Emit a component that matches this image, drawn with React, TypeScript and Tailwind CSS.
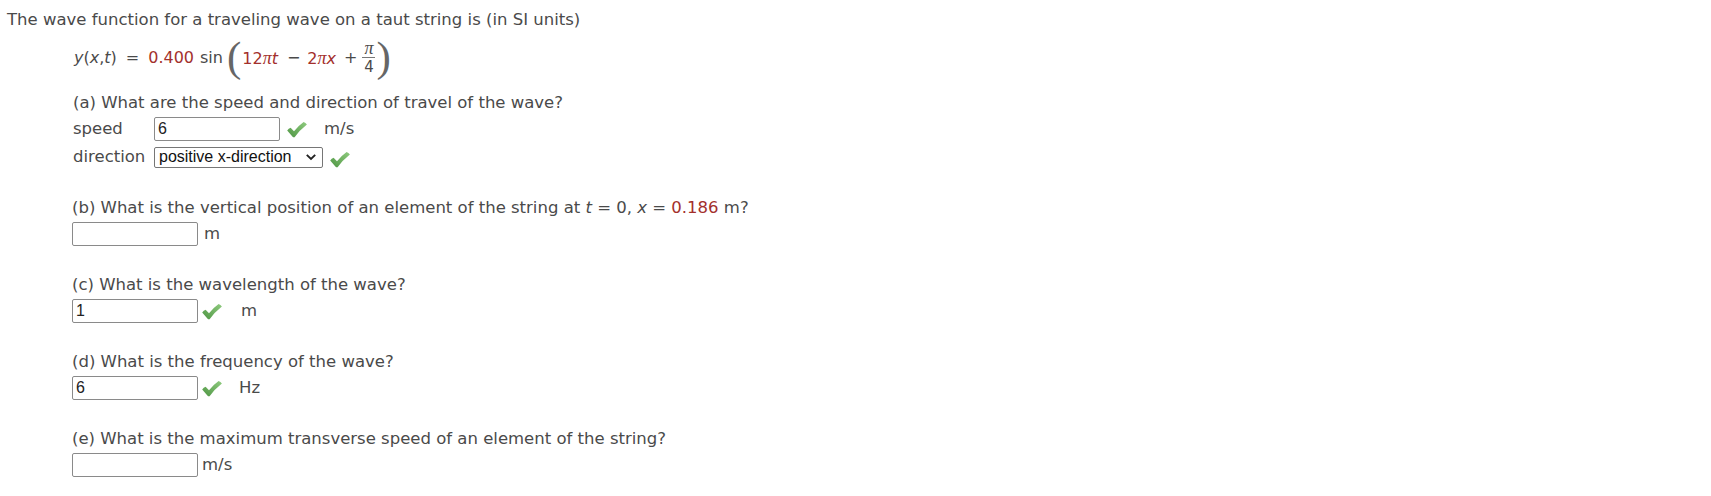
import React from "react";

const RED = "text-[#a3302c]";

function Check() {
  return (
    <svg width="22" height="17" viewBox="0 0 22 17" className="shrink-0">
      <defs>
        <linearGradient id="ck" x1="0" y1="1" x2="1" y2="0">
          <stop offset="0" stopColor="#4e9543" />
          <stop offset="1" stopColor="#8fcb7f" />
        </linearGradient>
      </defs>
      <path
        d="M1.2 9.6 Q2.6 7.6 4.6 6.8 L8 10.2 Q12.5 4.5 17.6 0.9 Q19.6 1.8 20.9 3.4 Q13.6 9 8.6 16.2 Q7.4 16.6 6.6 15.8 Z"
        fill="url(#ck)"
      />
    </svg>
  );
}

function Box({ value = "" }: { value?: string }) {
  return (
    <div className="w-[126px] h-[24px] border border-[#8a8a8a] rounded-[2px] bg-white flex items-center pl-[3px] text-[16px] text-[#222] font-['Liberation_Sans',Arial,sans-serif] shrink-0">
      {value}
    </div>
  );
}

function Question({ children }: { children: React.ReactNode }) {
  return <div className="mt-[28px] h-[20px] leading-[20px] pl-[65px] whitespace-nowrap">{children}</div>;
}

export default function App() {
  return (
    <div className="w-[1711px] h-[496px] bg-white text-[#4a4a4a] text-[16.5px] font-['DejaVu_Sans',Verdana,sans-serif] pl-[7px] pt-[10px] overflow-hidden">
      <div className="h-[20px] leading-[20px] whitespace-nowrap">
        The wave function for a traveling wave on a taut string is (in SI units)
      </div>

      <div className="mt-[8px] h-[40px] flex items-center pl-[67px] whitespace-nowrap text-[16px]">
        <span>
          <i>y</i>(<i>x</i>,<i>t</i>)
        </span>
        <span className="ml-[9px]">=</span>
        <span className={`ml-[9px] ${RED}`}>0.400</span>
        <span className="ml-[6px]">sin</span>
        <span className="ml-[4px] font-['Liberation_Serif',serif] text-[43px] leading-none text-[#666] -mt-[4px]">(</span>
        <span className={`ml-[1px] ${RED}`}>
          12<i className="font-['Liberation_Serif',serif] text-[18px]">π</i><i>t</i>
        </span>
        <span className="ml-[9px]">−</span>
        <span className={`ml-[7px] ${RED}`}>
          2<i className="font-['Liberation_Serif',serif] text-[18px]">π</i><i>x</i>
        </span>
        <span className="ml-[8px]">+</span>
        <span className="ml-[5px] inline-flex flex-col items-center text-[15px] leading-[16px] -mt-[2px]">
          <i className="font-['Liberation_Serif',serif] text-[18px] leading-[17px] px-[2px] border-b border-[#777]">π</i>
          <span className="pt-[1px]">4</span>
        </span>
        <span className="ml-[1px] font-['Liberation_Serif',serif] text-[43px] leading-none text-[#666] -mt-[4px]">)</span>
      </div>

      <div className="mt-[15px] h-[20px] leading-[20px] pl-[66px] whitespace-nowrap">
        (a) What are the speed and direction of travel of the wave?
      </div>
      <div className="mt-[3px] h-[26px] flex items-center pl-[66px]">
        <span className="w-[81px]">speed</span>
        <Box value="6" />
        <span className="ml-[6px]">
          <Check />
        </span>
        <span className="ml-[16px]">m/s</span>
      </div>
      <div className="mt-[3px] h-[24px] flex items-center pl-[66px]">
        <span className="w-[81px]">direction</span>
        <div className="w-[169px] h-[21px] border border-[#767676] rounded-[2px] bg-white flex items-center justify-between pl-[4px] pr-[5px] text-[16px] text-[#111] font-['Liberation_Sans',Arial,sans-serif]">
          <span>positive x-direction</span>
          <svg width="12" height="8" viewBox="0 0 12 8">
            <path d="M1.8 1.8 L6 6 L10.2 1.8" fill="none" stroke="#222" strokeWidth="1.9" />
          </svg>
        </div>
        <span className="ml-[6px] mt-[4px]">
          <Check />
        </span>
      </div>

      <div className="mt-[29px] h-[20px] leading-[20px] pl-[65px] whitespace-nowrap">
        (b) What is the vertical position of an element of the string at <i>t</i> = 0, <i>x</i> ={" "}
        <span className={RED}>0.186</span> m?
      </div>
      <div className="mt-[3px] h-[26px] flex items-center pl-[65px]">
        <Box />
        <span className="ml-[6px]">m</span>
      </div>

      <Question>(c) What is the wavelength of the wave?</Question>
      <div className="mt-[3px] h-[26px] flex items-center pl-[65px]">
        <Box value="1" />
        <span className="ml-[3px]">
          <Check />
        </span>
        <span className="ml-[18px]">m</span>
      </div>

      <Question>(d) What is the frequency of the wave?</Question>
      <div className="mt-[3px] h-[26px] flex items-center pl-[65px]">
        <Box value="6" />
        <span className="ml-[3px]">
          <Check />
        </span>
        <span className="ml-[16px]">Hz</span>
      </div>

      <Question>(e) What is the maximum transverse speed of an element of the string?</Question>
      <div className="mt-[3px] h-[26px] flex items-center pl-[65px]">
        <Box />
        <span className="ml-[4px]">m/s</span>
      </div>
    </div>
  );
}
